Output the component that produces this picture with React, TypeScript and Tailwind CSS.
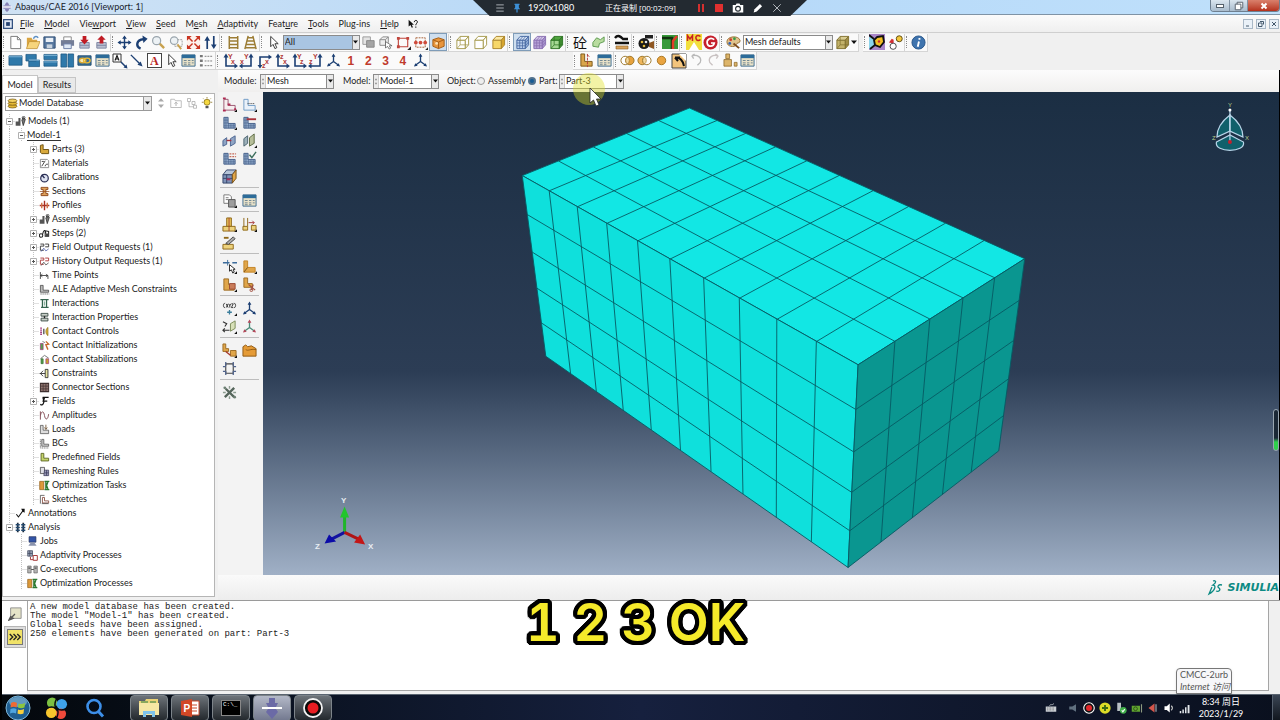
import React from "react";

type Kids = { children?: React.ReactNode };

/* ---------- drawing helpers ---------- */

function Ico({ children, className = "size-[15px]" }: Kids & { className?: string }) {
  return (
    <svg viewBox="0 0 16 16" className={className + " shrink-0"} fill="none" aria-hidden="true">
      {children}
    </svg>
  );
}

const NAVY = "#1c3f73";
const TAN = "#e0a64a";

const axisPaths: Record<string, string> = {
  bl: "M4 3V13H14",
  br: "M12 3V13H2",
  tl: "M4 14V4H14",
};

function AxisIcon({ kind, v, h }: { kind: string; v: string; h: string }) {
  const right = kind === "br";
  const top = kind === "tl";
  return (
    <Ico className="size-4">
      <path d={axisPaths[kind]} stroke={NAVY} strokeWidth="1.600" />
      {top ? (
        <path d="M1.500 12L4 15.500L6.500 12ZM12.500 1.500L16 4L12.500 6.500Z" fill={NAVY} />
      ) : right ? (
        <path d="M9.500 4.500L12 0.500L14.500 4.500ZM3.500 10.500L0 13L3.500 15.500Z" fill={NAVY} />
      ) : (
        <path d="M1.500 4.500L4 0.500L6.500 4.500ZM12.500 10.500L16 13L12.500 15.500Z" fill={NAVY} />
      )}
      <text x={top ? 6 : right ? 5 : 6} y={top ? 15 : 6} fontSize="7" fontWeight="700" fill="#b13a3a" fontFamily="Liberation Sans, sans-serif">{v}</text>
      <text x={right ? 1 : 9} y="11" fontSize="7" fontWeight="700" fill="#b13a3a" fontFamily="Liberation Sans, sans-serif">{h}</text>
    </Ico>
  );
}

function Triad({ red = false }: { red?: boolean }) {
  return (
    <Ico>
      <path d="M8 9V2M8 9L2.500 13M8 9L13.500 13" stroke={red ? "#4a8a78" : NAVY} strokeWidth="1.400" />
      <path d="M6 4L8 0.500L10 4ZM1 14.500L2.500 11L5 13.500ZM15 14.500L13.500 11L11 13.500Z" fill={red ? "#b5485a" : NAVY} />
    </Ico>
  );
}

function Cube({ front, top, side, line, grid = false, frame = false }: { front: string; top: string; side: string; line: string; grid?: boolean; frame?: boolean }) {
  return (
    <Ico>
      <path d="M2 5.500H11V14.500H2Z" fill={front} stroke={line} />
      <path d="M2 5.500L5.500 1.500H14.500L11 5.500Z" fill={top} stroke={line} />
      <path d="M11 5.500L14.500 1.500V10.500L11 14.500Z" fill={side} stroke={line} />
      {grid && <path d="M5 5.500V14.500M8 5.500V14.500M2 8.500H11L14.500 4.500M2 11.500H11L14.500 7.500M5 5.500L8.500 1.500M8 5.500L11.500 1.500" stroke={line} strokeWidth="0.800" />}
      {frame && <path d="M5.500 1.500V10.500H14.500M5.500 10.500L2 14.500" stroke={line} strokeWidth="0.800" />}
    </Ico>
  );
}

function Bracket({ fill = "#7f9bbd", line = "#45608a", mesh = false, children }: Kids & { fill?: string; line?: string; mesh?: boolean }) {
  return (
    <Ico>
      <path d="M2 2.500H6.500V9H14V14H2Z" fill={fill} stroke={line} />
      {mesh && <path d="M4.200 2.500V14M2 5.500H6.500M2 8.500H6.500M2 11.500H14M7 9V14M9.500 9V14M12 9V14" stroke={line} strokeWidth="0.600" />}
      {children}
    </Ico>
  );
}

function Win({ tone }: { tone: "single" | "cascade" | "rows" | "cols" }) {
  const shape = {
    single: "M1 3H15V13H1Z",
    cascade: "M1 1.500H12V8.500H1ZM4 7.500H15.500V14.500H4Z",
    rows: "M1 1.500H15V7H1ZM1 8.500H15V14H1Z",
    cols: "M1 1H7V15H1ZM8.500 1H14.500V15H8.500Z",
  }[tone];
  return (
    <Ico>
      <path d={shape} fill="#2f79aa" stroke="#1d5580" strokeWidth="0.800" />
      {tone === "cascade" && <path d="M4 7.500H15.500" stroke="#a8d3ee" />}
      {tone === "rows" && <path d="M1 2.500H15M1 9.500H15" stroke="#83b9da" />}
      {tone === "single" && <path d="M1 4H15" stroke="#83b9da" />}
    </Ico>
  );
}

const TableIco = () => (
  <Ico>
    <path d="M1 2H15V14H1Z" fill="#e9e2c8" stroke="#3b6a8f" />
    <path d="M1 2H15V5.500H1Z" fill="#2d6c99" />
    <path d="M3 8H6M7.500 8H10M11.500 8H13.500M3 10.500H6M7.500 10.500H10M11.500 10.500H13.500M3 12.500H6M7.500 12.500H10" stroke="#6b8291" />
  </Ico>
);

const Cursor = () => (
  <Ico>
    <path d="M5 1.500V12.500L7.500 10L9.500 14.500L11.500 13.500L9.500 9.300H13Z" fill="#fff" stroke="#333" />
  </Ico>
);

const Num = ({ n }: { n: string }) => <span className="font-['Liberation_Sans',sans-serif] text-[12px] font-bold leading-4 text-[#c03a2c]">{n}</span>;

const Rings = ({ a, b }: { a: string; b: string }) => (
  <Ico>
    <circle cx="5.500" cy="8" r="4.500" fill={a} stroke="#9a7426" />
    <circle cx="10.500" cy="8" r="4.500" fill={b} stroke="#9a7426" />
    <path d="M8 4.300A4.500 4.500 0 0 1 8 11.700A4.500 4.500 0 0 1 8 4.300Z" fill="#f5d9a0" stroke="#9a7426" strokeWidth="0.700" />
  </Ico>
);

/* ---------- toolbar parts ---------- */

function Btn({ label, on, children }: Kids & { label: string; on?: boolean }) {
  return (
    <button
      type="button"
      aria-label={label}
      className={on ? "flex size-[18px] items-center justify-center border border-[#7f9cb8] bg-[#cfdfef]" : "flex size-4 items-center justify-center"}
    >
      {children}
    </button>
  );
}

function Bar({ w, children }: Kids & { w: string }) {
  return (
    <div className={w + " flex h-[18px] shrink-0 items-center border-r border-b border-[#d5d5d5] bg-[#fafafa]"}>
      <span className="mx-px h-3 w-[3px] shrink-0 border-l border-dotted border-[#888]" />
      <div className="flex min-w-0 flex-1 items-center justify-around">{children}</div>
    </div>
  );
}

function Drop({ label, value, w, spin, tone = "bg-white" }: { label: string; value: string; w: string; spin?: boolean; tone?: string }) {
  return (
    <div className={w + " " + tone + " flex h-[15px] shrink-0 items-stretch border border-[#8b8b8b]"}>
      {spin && (
        <span className="flex w-[5px] items-center border-r border-[#ccc] bg-[#ececec]">
          <svg viewBox="0 0 5 11" className="h-[11px] w-[5px]" aria-hidden="true">
            <path d="M1 4L2.500 1.500L4 4ZM1 7L2.500 9.500L4 7Z" fill="#888" />
          </svg>
        </span>
      )}
      <select aria-label={label} className="min-w-0 flex-1 appearance-none bg-transparent pl-px text-[9px] leading-3 text-[#222] outline-none">
        <option>{value}</option>
      </select>
      <span className="pointer-events-none flex w-[7px] items-center justify-center border-l border-[#8b8b8b] bg-[#e9e9e9]">
        <svg viewBox="0 0 5 4" className="h-1 w-[5px]" aria-hidden="true">
          <path d="M0 0.500H5L2.500 3.500Z" fill="#111" />
        </svg>
      </span>
    </div>
  );
}

/* ---------- header ---------- */

function TitleBar() {
  return (
    <div className="relative flex h-[15px] items-start justify-between border-b border-[#7f93a5] bg-linear-to-r from-[#cfe2f4] via-[#b5d8f8] to-[#bfe0fb]">
      <div className="flex items-center gap-[3px]">
        <Ico className="size-[10px]">
          <path d="M8 0L11 3V6H5V3ZM8 16L11 13V10H5V13Z" fill="#8481b4" />
          <path d="M0 8L3 5H13L16 8L13 11H3Z" fill="#9a97c4" />
          <path d="M0 8H16" stroke="#fff" strokeWidth="2" />
        </Ico>
        <h1 className="text-[9px] leading-[14px] text-[#16202b]">Abaqus/CAE 2016 [Viewport: 1]</h1>
      </div>
      <div className="flex h-3 overflow-hidden rounded-b-sm border border-t-0 border-[#6e7f90]">
        <button type="button" aria-label="Minimize" className="flex w-[19px] items-center justify-center border-r border-[#8293a4] bg-linear-to-b from-[#dbe6ef] to-[#a9bccd]">
          <span className="h-1 w-2 border border-[#55606b] bg-white" />
        </button>
        <button type="button" aria-label="Restore" className="flex w-[18px] items-center justify-center border-r border-[#8293a4] bg-linear-to-b from-[#dbe6ef] to-[#a9bccd]">
          <Ico className="size-2.5">
            <path d="M5 2H14V11H5Z" fill="#fff" stroke="#55606b" strokeWidth="1.500" />
            <path d="M2 5H11V14H2Z" fill="#fff" stroke="#55606b" strokeWidth="1.500" />
          </Ico>
        </button>
        <button type="button" aria-label="Close" className="flex w-[31px] items-center justify-center bg-linear-to-b from-[#d9806c] to-[#b5301c]">
          <Ico className="size-2">
            <path d="M3 3L13 13M13 3L3 13" stroke="#fff" strokeWidth="4" />
          </Ico>
        </button>
      </div>
    </div>
  );
}

function RecorderBar() {
  return (
    <div className="absolute top-0 left-[471px] flex h-4 w-[334px] items-center bg-[#232a31] pl-[22px] text-white [clip-path:polygon(0_0,100%_0,95%_100%,5%_100%)]">
      <Ico className="size-2.5">
        <path d="M2 3H14M2 8H14M2 13H14" stroke="#b9bec3" strokeWidth="1.400" />
      </Ico>
      <Ico className="ml-[7px] size-2.5">
        <path d="M4 1H12V3H11V7L13 10H3L5 7V3H4ZM7 10H9V15H7Z" fill="#3c8fd6" />
      </Ico>
      <span className="ml-[6px] w-[77px] text-[9px] leading-4">1920x1080</span>
      <span className="w-[91px] font-['Open_Sans','Noto_Sans_CJK_SC',sans-serif] text-[8px] leading-4">正在录制 [00:02:09]</span>
      <div className="flex items-center gap-[9px]">
        <button type="button" aria-label="Pause recording" className="flex size-2.5 items-center justify-center gap-[2px]">
          <span className="h-2 w-[2px] bg-[#d4302f]" />
          <span className="h-2 w-[2px] bg-[#d4302f]" />
        </button>
        <button type="button" aria-label="Stop recording" className="size-2 bg-[#e0302f]" />
        <button type="button" aria-label="Take picture">
          <Ico className="size-3">
            <path d="M1 4H5L6 2H10L11 4H15V14H1Z" fill="#fff" />
            <circle cx="8" cy="9" r="3.200" stroke="#232a31" strokeWidth="1.500" />
          </Ico>
        </button>
        <button type="button" aria-label="Draw">
          <Ico className="size-2.5">
            <path d="M1 15L2.500 10L11 1.500L14.500 5L6 13.500Z" fill="#fff" />
          </Ico>
        </button>
        <button type="button" aria-label="Hide recorder">
          <Ico className="size-2.5">
            <path d="M2 2L14 14M14 2L2 14" stroke="#b9bec3" strokeWidth="1.500" />
          </Ico>
        </button>
      </div>
    </div>
  );
}

const menus: [string, string, string][] = [
  ["", "F", "ile"],
  ["", "M", "odel"],
  ["Vie", "w", "port"],
  ["", "V", "iew"],
  ["", "S", "eed"],
  ["M", "e", "sh"],
  ["", "A", "daptivity"],
  ["Feat", "u", "re"],
  ["", "T", "ools"],
  ["Plu", "g", "-ins"],
  ["", "H", "elp"],
];

function MenuBar() {
  return (
    <nav className="flex h-[18px] items-center border-b border-[#cfcfcf] bg-linear-to-b from-[#fbfbfb] to-[#efefef] pl-px">
      <Ico className="mr-[7px] size-2.5">
        <path d="M1 1H15V15H1Z" fill="#dfe6f2" stroke="#33507f" strokeWidth="2" />
        <path d="M5 5H11V11H5Z" fill="#24406e" />
      </Ico>
      <div className="flex gap-[10px] text-[9px] leading-4">
        {menus.map(([a, u, b]) => (
          <button type="button" key={a + u + b}>
            {a}
            <span className="underline">{u}</span>
            {b}
          </button>
        ))}
      </div>
      <Ico className="ml-[9px] size-2.5">
        <path d="M1 1V12L4 9.500L6 14L8 13L6 9H9.500Z" fill="#111" />
        <path d="M10 5C10 1.500 15 1.500 15 4.500C15 7 12.500 7 12.500 10M12.500 12V14" stroke="#111" strokeWidth="1.600" />
      </Ico>
      <div className="ml-auto flex gap-[3px] pr-px">
        {["M4 12H10", "M6 3H13V9M3 6H10V13H3Z", "M4 4L12 12M12 4L4 12"].map((d, i) => (
          <button type="button" key={d} aria-label={["Minimize viewport", "Restore viewport", "Close viewport"][i]} className="border border-[#a9b8c6] bg-[#eaf1f8]">
            <Ico className="size-2">
              <path d={d} stroke="#44586b" strokeWidth="2" />
            </Ico>
          </button>
        ))}
      </div>
    </nav>
  );
}

function MainToolbar() {
  return (
    <div className="flex h-[19px] items-center bg-[#f0f0f0]">
      <Bar w="w-[109px]">
        <Btn label="New"><Ico><path d="M3 1.500H10L13.500 5V14.500H3Z" fill="#fff" stroke="#777" /><path d="M10 1.500V5H13.500" stroke="#777" /></Ico></Btn>
        <Btn label="Open"><Ico><path d="M2 3H7L8 5H13V14H2Z" fill="#d9a441" /><path d="M4.500 7H16L13 14.500H1.500Z" fill="#f7d57c" stroke="#b98728" strokeWidth="0.700" /><path d="M9 4C10 1 13 1 14 3" stroke="#5c8fc4" strokeWidth="1.500" /></Ico></Btn>
        <Btn label="Save"><Ico><path d="M2 2H14V14H2Z" fill="#56779f" stroke="#2f4d74" /><path d="M4 3H12V7.500H4Z" fill="#e8eef5" /><path d="M5 10H11V14H5Z" fill="#c7d2de" /></Ico></Btn>
        <Btn label="Print"><Ico><path d="M4 2H12V6H4Z" fill="#fff" stroke="#888" /><path d="M1 5.500H15V11.500H1Z" fill="#747d96" /><path d="M4 9.500H12V14.500H4Z" fill="#dfe8f5" stroke="#6c7da5" /></Ico></Btn>
        <Btn label="Import database"><Ico><path d="M3 8H13V14H3Z" fill="#b9bfd0" stroke="#7d86a2" /><path d="M3 11H13" stroke="#7d86a2" /><path d="M6 1H10V5H12.500L8 10L3.500 5H6Z" fill="#c01c24" /></Ico></Btn>
        <Btn label="Export database"><Ico><path d="M3 8H13V14H3Z" fill="#b9bfd0" stroke="#7d86a2" /><path d="M3 11H13" stroke="#7d86a2" /><path d="M6 9H10V5H12.500L8 0.500L3.500 5H6Z" fill="#c01c24" /></Ico></Btn>
      </Bar>
      <Bar w="w-[109px]">
        <Btn label="Pan"><Ico><path d="M8 2V14M2 8H14" stroke={NAVY} strokeWidth="1.500" /><path d="M5.500 4L8 0.500L10.500 4ZM5.500 12L8 15.500L10.500 12ZM4 5.500L0.500 8L4 10.500ZM12 5.500L15.500 8L12 10.500Z" fill={NAVY} /></Ico></Btn>
        <Btn label="Rotate"><Ico><path d="M7 14.500C1.500 12 2.500 5 10 4.500" stroke={NAVY} strokeWidth="2.600" /><path d="M9 0.500L14.500 4L10 8.500Z" fill={NAVY} /></Ico></Btn>
        <Btn label="Magnify"><Ico><path d="M9 9L14 14" stroke="#c9a24e" strokeWidth="2.500" /><circle cx="6" cy="6" r="4.300" fill="#edf2f5" stroke="#9aa5ad" strokeWidth="1.300" /></Ico></Btn>
        <Btn label="Box zoom"><Ico><path d="M6 5H14V12H6Z" stroke="#9a9a9a" strokeDasharray="2 1" /><path d="M9 10L13 15" stroke="#c9a24e" strokeWidth="2" /><circle cx="5.500" cy="6" r="4" fill="#edf2f5" stroke="#9aa5ad" strokeWidth="1.200" /></Ico></Btn>
        <Btn label="Auto fit"><Ico><path d="M1 1H15V15H1Z" fill="#fdf1ec" /><path d="M1 1H6L1 6ZM15 1V6L10 1ZM1 15V10L6 15ZM15 15H10L15 10Z" fill="#c93522" /><path d="M3 3L7 7M13 3L9 7M3 13L7 9M13 13L9 9" stroke="#c93522" strokeWidth="1.600" /></Ico></Btn>
        <Btn label="Cycle views"><Ico><path d="M4.500 5V15M11.500 1V11" stroke={NAVY} strokeWidth="1.800" /><path d="M1.500 6L4.500 1L7.500 6ZM8.500 10L11.500 15L14.500 10Z" fill={NAVY} /></Ico></Btn>
      </Bar>
      <Bar w="w-[40px]">
        <Btn label="Perspective off"><Ico><path d="M3.500 1V15M12.500 1V15M3.500 3H12.500M3.500 6.500H12.500M3.500 10H12.500M3.500 13.500H12.500" stroke="#9c7d35" strokeWidth="1.600" /></Ico></Btn>
        <Btn label="Perspective on"><Ico><path d="M5.500 1L2 15M10.500 1L14 15M5 3H11M4.500 6.500H11.500M3.500 10H12.500M2.500 13.500H13.500" stroke="#9c7d35" strokeWidth="1.600" /></Ico></Btn>
      </Bar>
      <Bar w="w-[189px]">
        <Btn label="Select"><Cursor /></Btn>
        <Drop label="Selection filter" value="All" w="w-[77px]" tone="bg-[#a9c5e2]" />
        <Btn label="Selection overlap"><Ico><path d="M2 2H10V10H2Z" fill="#e4e4e4" stroke="#9b9b9b" /><path d="M6 6H14V13H6Z" fill="#a5a5a5" stroke="#888" /></Ico></Btn>
        <Btn label="Selection inside"><Ico><path d="M2 5L5 2H11V8L8 11H2ZM2 5H8V11M8 5L11 2" fill="#eee" stroke="#888" /><path d="M8 7V14L10 12L12 15L13.500 14L12 11.500H15Z" fill="#fff" stroke="#555" strokeWidth="0.800" /></Ico></Btn>
        <Btn label="Drag shape"><Ico><path d="M2.500 3.500H12.500V12.500H2.500Z" stroke="#c0463d" strokeWidth="1.200" /><path d="M1 2H4V5H1ZM11 2H14V5H11ZM1 11H4V14H1Z" fill="#c0463d" /><path d="M16 16H12L16 12Z" fill="#222" /></Ico></Btn>
        <Btn label="Drag limits"><Ico><path d="M3 3H13V13H3Z" stroke="#a35b30" strokeDasharray="2 1" /><circle cx="3" cy="8" r="2" fill="#cf4b3c" /><circle cx="8" cy="8" r="2" fill="#cf4b3c" /><circle cx="13" cy="8" r="2" fill="#cf4b3c" /><path d="M16 16H13L16 13Z" fill="#222" /></Ico></Btn>
        <Btn label="Select entities" on><Ico><path d="M2 5L8 3L14 5V12L8 14.500L2 12Z" fill="#e8953c" stroke="#a35c14" /><path d="M2 5L8 7.500L14 5M8 7.500V14.500" stroke="#a35c14" /><circle cx="6" cy="9" r="1.500" fill="#fce1b4" /></Ico></Btn>
      </Bar>
      <Bar w="w-[59px]">
        <Btn label="Wireframe"><Cube front="#fff" top="#fff" side="#fff" line="#a59a4d" frame /></Btn>
        <Btn label="Hidden line"><Cube front="#fff" top="#fff" side="#fff" line="#a59a4d" /></Btn>
        <Btn label="Shaded"><Cube front="#f7d768" top="#fbe9a4" side="#d7a52e" line="#ab8429" /></Btn>
      </Bar>
      <Bar w="w-[58px]">
        <Btn label="Show mesh" on><Cube front="#b7cdec" top="#d5e2f4" side="#94b0da" line="#4769a2" grid /></Btn>
        <Btn label="Show seeds"><Cube front="#b7a3d8" top="#d3c6ea" side="#a893cf" line="#8a70b2" grid /></Btn>
        <Btn label="Show geometry"><Cube front="#a5d894" top="#51a53f" side="#3f8c30" line="#2d7424" frame /></Btn>
      </Bar>
      <Bar w="w-[42px]">
        <Btn label="Concrete"><span className="font-['Noto_Sans_CJK_SC',sans-serif] text-[14px] leading-4 text-[#111]">砼</span></Btn>
        <Btn label="Feature copy"><Ico><path d="M2 8L6 3L10 5L14 2V7L9 9L8 13L2 12Z" fill="#b9dca0" stroke="#5c9a4f" /></Ico></Btn>
      </Bar>
      <Bar w="w-[24px]">
        <Btn label="Seam"><Ico className="size-4"><path d="M1 4C4 0 7 3 9 5H14M1 9H15" stroke="#111" strokeWidth="2.400" /><path d="M2 12H14V15H2Z" fill="#d9a35c" stroke="#8b5b1e" strokeWidth="0.600" /></Ico></Btn>
      </Bar>
      <Bar w="w-[23px]">
        <Btn label="GIF recorder"><Ico className="size-4"><circle cx="6" cy="9.500" r="5.500" fill="#1a1a1a" /><path d="M7 1H15V4.500H7Z" fill="#222" /><circle cx="4" cy="8" r="1.300" fill="#e2b93c" /><circle cx="8" cy="8" r="1.300" fill="#e8e8e8" /><circle cx="6" cy="12" r="1.300" fill="#e2b93c" /><path d="M11 9L16 7V15L11 13Z" fill="#8f5722" /></Ico></Btn>
      </Bar>
      <Bar w="w-[25px]">
        <Btn label="Root model"><Ico className="size-4"><path d="M0 1H16V15H0Z" fill="#379a3a" /><path d="M0 4H10V15" stroke="#12320f" strokeWidth="2.500" /><path d="M15 2L11 7V15" stroke="#e13c28" strokeWidth="2.500" /></Ico></Btn>
      </Bar>
      <Bar w="w-[40px]">
        <Btn label="MC"><Ico className="size-4"><path d="M0 0H16V16H0Z" fill="#f2df3d" /><path d="M1.500 7V1.500L4 5L6.500 1.500V7M14.500 2.500C11 0 9.500 2.500 10 4.500C10.500 7 13 7 14.500 5.500" stroke="#c82222" strokeWidth="1.500" /><path d="M3 16L8 8L13 16Z" fill="#fff" /></Ico></Btn>
        <Btn label="Grain"><Ico><circle cx="8" cy="8" r="7.500" fill="#c51f2c" /><path d="M12 5C8 1.500 3.500 5 4.500 9C5.500 13 11 13 12 8.500H8.500" stroke="#fff" strokeWidth="1.800" /></Ico></Btn>
      </Bar>
      <Bar w="w-[139px]">
        <Btn label="Colour code"><Ico><path d="M1 7C1 1 14 0 15 6C15.500 9 11 8 11 10C11 13 1 14 1 7Z" fill="#dfc28c" stroke="#997237" /><circle cx="5" cy="5" r="1.500" fill="#cf3a2d" /><circle cx="9" cy="4" r="1.500" fill="#3b9a48" /><circle cx="4" cy="9" r="1.500" fill="#2f60b5" /><path d="M8 9L14 14" stroke="#7c4b1d" strokeWidth="2" /></Ico></Btn>
        <Drop label="Color mapping" value="Mesh defaults" w="w-[90px]" />
        <Btn label="Translucency"><Cube front="#c3b26a" top="#d9cd93" side="#a08d46" line="#81712f" frame /></Btn>
        <Ico className="size-1.5"><path d="M0 4H16L8 13Z" fill="#111" /></Ico>
      </Bar>
      <div className="w-1 shrink-0" />
      <Bar w="w-[42px]">
        <Btn label="Voronoi"><Ico className="size-4"><path d="M0 0H16V16H0Z" fill="#a985c9" /><path d="M0 3L5 4L6 11L1 15H0Z" fill="#8cd4ec" /><path d="M8 3L14 2L15 8L11 13L6 11L5 6Z" fill="#f2bf24" stroke="#111" strokeWidth="1.800" /><path d="M0 1L5 5M6 11L1 15" stroke="#111" strokeWidth="1.800" /><circle cx="10" cy="7.500" r="1.200" fill="#c33" /></Ico></Btn>
        <Btn label="Aggregate"><Ico><path d="M1 8L4 4L6 5V9Z" fill="#d32f33" /><circle cx="12" cy="4" r="3.200" fill="#f3c73b" stroke="#5b4a11" /><circle cx="5.500" cy="12" r="3.300" fill="#fff" stroke="#444" /></Ico></Btn>
      </Bar>
      <Bar w="w-[23px]">
        <Btn label="Information"><Ico><circle cx="8" cy="8" r="7" fill="#3f74ae" stroke="#27558a" /><path d="M9 3.200V5M8.500 7L7.200 12.500" stroke="#fff" strokeWidth="2" /></Ico></Btn>
      </Bar>
    </div>
  );
}

function ViewToolbar() {
  return (
    <div className="flex h-[18px] items-center bg-[#f0f0f0]">
      <Bar w="w-[214px]">
        <Btn label="Single viewport"><Win tone="single" /></Btn>
        <Btn label="Cascade"><Win tone="cascade" /></Btn>
        <Btn label="Tile horizontally"><Win tone="rows" /></Btn>
        <Btn label="Tile vertically"><Win tone="cols" /></Btn>
        <Btn label="Link viewports"><Ico><path d="M1 3H15V13H1Z" fill="#3b6f96" stroke="#1d4c70" /><ellipse cx="6" cy="8" rx="3.500" ry="2.500" fill="#f4e7b5" stroke="#d9a42c" strokeWidth="1.500" /><ellipse cx="10.500" cy="8" rx="3.500" ry="2.500" stroke="#e9ba36" strokeWidth="1.500" /></Ico></Btn>
        <Btn label="Viewport options"><TableIco /></Btn>
        <Btn label="Text callout"><Ico className="size-4"><path d="M1 1H9V9H1Z" fill="#fff" stroke="#333" /><path d="M3 7.500L5 2.500L7 7.500M4 6H6" stroke="#111" strokeWidth="1.100" /><path d="M9 9L14 14" stroke={NAVY} strokeWidth="1.500" /><path d="M15.500 15.500L11.500 14.500L14.500 11.500Z" fill={NAVY} /></Ico></Btn>
        <Btn label="Arrow annotation"><Ico><path d="M2 2L12 12" stroke={NAVY} strokeWidth="1.500" /><path d="M14.500 14.500L9 12.500L12.500 9Z" fill={NAVY} /></Ico></Btn>
        <Btn label="Text annotation"><span className="flex size-[15px] items-center justify-center border border-[#444] bg-white font-['Liberation_Serif',serif] text-[12px] font-bold leading-3 text-[#b8251d]">A</span></Btn>
        <Btn label="Edit annotation"><Cursor /></Btn>
        <Btn label="Annotation manager"><TableIco /></Btn>
        <Btn label="Annotation list"><Ico><path d="M1 2H4V4.500H1ZM1 7H4V9.500H1ZM1 12H4V14.500H1Z" fill="#777" /><path d="M6 3.500H15M6 8.500H15M6 13.500H15" stroke="#777" strokeDasharray="2 1" /></Ico></Btn>
      </Bar>
      <Bar w="w-[214px]">
        <Btn label="Front view"><AxisIcon kind="bl" v="Y" h="x" /></Btn>
        <Btn label="Back view"><AxisIcon kind="br" v="Y" h="x" /></Btn>
        <Btn label="Top view"><AxisIcon kind="tl" v="z" h="x" /></Btn>
        <Btn label="Bottom view"><AxisIcon kind="bl" v="z" h="x" /></Btn>
        <Btn label="Left view"><AxisIcon kind="bl" v="Y" h="z" /></Btn>
        <Btn label="Right view"><AxisIcon kind="br" v="Y" h="z" /></Btn>
        <Btn label="Isometric view"><Triad /></Btn>
        <Btn label="User view 1"><Num n="1" /></Btn>
        <Btn label="User view 2"><Num n="2" /></Btn>
        <Btn label="User view 3"><Num n="3" /></Btn>
        <Btn label="User view 4"><Num n="4" /></Btn>
        <Btn label="Save view"><Triad /></Btn>
      </Bar>
      <div className="w-[143px] shrink-0" />
      <Bar w="w-[41px]">
        <Btn label="Create datum"><Ico><path d="M2 1H6V9H14V14H2Z" fill="#d9a54b" stroke="#7d5a1c" /><path d="M9 1V15M11 4L9 2" stroke="#b03a3a" strokeDasharray="3 1" /></Ico></Btn>
        <Btn label="Display group manager"><TableIco /></Btn>
      </Bar>
      <Bar w="w-[143px]">
        <Btn label="Replace group"><Rings a="#fff" b="#e7a23d" /></Btn>
        <Btn label="Intersect group"><Rings a="#f0b65a" b="#fff" /></Btn>
        <Btn label="Display all"><Ico><circle cx="8" cy="8" r="4.500" fill="#e9a441" stroke="#a8741f" /></Ico></Btn>
        <Btn label="Remove selected"><Ico className="size-4"><path d="M1 1H15V15H1Z" fill="#f3c47c" stroke="#444" /><path d="M8 1H15V8Z" fill="#fff" /><path d="M4 4.500H9M4 4.500L7 8M5 5C9 4 12 8 13 13" stroke="#111" strokeWidth="2" /></Ico></Btn>
        <Btn label="Undo"><Ico><path d="M3 3C9 1 14 5 12 10L9 13M3 3L6 1M3 3L5 6" stroke="#b9b9b9" strokeWidth="1.400" /></Ico></Btn>
        <Btn label="Redo"><Ico><path d="M13 3C7 1 2 5 4 10L7 13M13 3L10 1M13 3L11 6" stroke="#c9c2c2" strokeWidth="1.400" /></Ico></Btn>
        <Btn label="Part group"><Ico><path d="M3 1H7V6H3ZM1 7H9V14H1ZM12 10H15V14H12Z" fill="#ddb56a" stroke="#8b6525" strokeWidth="0.800" /></Ico></Btn>
        <Btn label="Group options"><TableIco /></Btn>
      </Bar>
    </div>
  );
}

/* ---------- model tree ---------- */

const treeIcons: Record<string, React.ReactNode> = {
  models: <><path d="M1 14V8H5V3H8V14Z" fill="#555" /><path d="M12 2L15 5L12 14L10 6Z" fill="#777" stroke="#222" /><circle cx="12.500" cy="2.500" r="2" stroke="#222" /></>,
  part: <path d="M2 2L6 1V8H14V14H4L2 12Z" fill="#d8a93c" stroke="#6d5113" strokeWidth="1.400" />,
  material: <><path d="M2 2H12L14 4V14H2Z" stroke="#666" /><path d="M4 12L9 4M9 12C9 9 11 9 13 9M4 5H7" stroke="#444" strokeWidth="1.400" /></>,
  calib: <><circle cx="8" cy="9" r="5.500" fill="#dfe4f2" stroke="#2b2f55" strokeWidth="1.800" /><path d="M8 9L4 4" stroke="#2b2f55" strokeWidth="2" /></>,
  section: <><path d="M3 2H13V5H10V11H13V14H3V11H6V5H3Z" fill="#e0a35d" stroke="#8a4519" strokeWidth="1.300" /><path d="M1 8H15" stroke="#8a4519" /></>,
  profile: <><path d="M8 1V15M1 8H15" stroke="#a82f22" strokeWidth="2" /><path d="M4 4V12M12 4V12" stroke="#d07245" strokeWidth="2" /></>,
  step: <><circle cx="3" cy="11" r="2.500" stroke="#222" strokeWidth="1.500" /><path d="M5 10C7 2 9 2 10 8M9 4L14 5V12L9 12Z" stroke="#222" strokeWidth="1.500" /><path d="M10 8H14V12H10Z" fill="#444" /></>,
  field: <><path d="M2 3H7V6H2V12H7M9 3H14V7H9" stroke="#333" strokeWidth="1.300" /><path d="M3 14L7 9L10 13L14 10" stroke="#3a4fa5" /></>,
  history: <><path d="M2 3H7V6H2V12H7M9 3H14V7H9" stroke="#a33" strokeWidth="1.300" /><path d="M3 14L7 9L10 13L14 10" stroke="#333" /></>,
  time: <><path d="M2 3V13M13 8V13M2 8H13" stroke="#333" strokeWidth="1.200" /><path d="M5 6L2 8L5 10M10 6L13 8L10 10" stroke="#333" /></>,
  ale: <><path d="M2 2H6V9H14V12H2Z" fill="#bbb" stroke="#333" /><path d="M2 14.500H15" stroke="#333" strokeDasharray="2 1" /></>,
  inter: <><path d="M2 2.500H14M3 13.500H14M5 3V13M11 3V13" stroke="#35644f" strokeWidth="1.800" /><path d="M7 5H9V11H7Z" fill="#8cb5a0" /></>,
  interp: <><path d="M3 2H13V6H3ZM3 9H13V13H3Z" fill="#c8cfc8" stroke="#3a4a44" strokeWidth="1.300" /><path d="M8 6V9" stroke="#222" strokeWidth="2" /></>,
  contact: <><path d="M3 2V14" stroke="#a0357a" strokeWidth="2.500" strokeDasharray="2 1" /><path d="M7 4V12" stroke="#555" strokeWidth="2" /><path d="M13 2C9 5 9 11 13 14Z" fill="#ddb53c" stroke="#8c6c14" /></>,
  contact2: <><path d="M2 5H6V14H2Z" fill="#57a04f" stroke="#a0357a" /><path d="M10 2L14 6L10 7L13 14" stroke="#c7672c" strokeWidth="2" /><path d="M5 2L9 4" stroke="#555" /></>,
  contact3: <><path d="M2 7L8 2L14 6" stroke="#777" strokeWidth="1.400" /><path d="M3 7H6V14H3Z" fill="#57a04f" stroke="#2d6628" /><path d="M10 7H14V14H10Z" fill="#c9a52f" stroke="#a0357a" /></>,
  constraint: <><path d="M9 2H13V14H9Z" fill="#e8e5a0" stroke="#333" strokeWidth="1.300" /><path d="M1 8H9M6 4L2 8L6 12" stroke="#333" strokeWidth="1.300" /></>,
  connector: <><path d="M2 2H14V14H2Z" fill="#8f7570" stroke="#3f3030" strokeWidth="1.500" /><path d="M6 2V14M10 2V14M2 6H14M2 10H14" stroke="#3f3030" /></>,
  fields: <path d="M14 2H6C5 4 8 6 7 9C6 13 4 14 2 12M5 7.500H12M8 3L6 8" stroke="#111" strokeWidth="1.800" />,
  amp: <><path d="M2 14V2M2 8C4 0 7 2 8 8C9 15 13 15 14 6" stroke="#86505a" strokeWidth="1.400" /></>,
  load: <><path d="M2 2H6V9H14V14H2Z" fill="#ddd" stroke="#444" /><path d="M10 1V7M8 5L10 8L12 5" stroke="#6a4d2c" strokeWidth="1.200" /></>,
  bc: <><path d="M4 2H7V9H14V12H4Z" fill="#ccc" stroke="#444" /><path d="M2 2V14.500H14" stroke="#333" strokeDasharray="1.500 1" /></>,
  predef: <path d="M3 2H7V9H14V13H3Z" fill="#c5d46d" stroke="#5a6422" strokeWidth="1.300" />,
  remesh: <><path d="M2 2H8V11H2Z" fill="#e0e0e6" stroke="#333" /><path d="M8 6H14V14H7Z" fill="#9b9bb8" stroke="#333355" /><path d="M11 6V14M8 10H14" stroke="#333355" /></>,
  optim: <><path d="M1 2H7V14H1Z" fill="#dd9a3b" stroke="#8f5a14" /><path d="M8 2H15M8 14H15M10 3V13M13 3L11 8L13 13" stroke="#2d7a32" strokeWidth="2" /></>,
  sketch: <><path d="M5 5H8V10H14V13H5Z" stroke="#8d5548" strokeWidth="1.300" /><path d="M2 2H8M2 2V14M14 14H4" stroke="#333" /></>,
  note: <><path d="M2 9L5 13L13 2" stroke="#111" strokeWidth="1.500" /><path d="M9 1H14V7L11 5Z" fill="#111" /></>,
  analysis: <><path d="M4 1V15M12 1V15" stroke="#1d2c3f" strokeWidth="2.500" /><path d="M1 4H7M1 8H7M1 12H7M9 4H15M9 8H15M9 12H15" stroke="#234a70" strokeWidth="2" /></>,
  job: <><path d="M3 1H13V9H3Z" fill="#3355a8" stroke="#26335c" /><path d="M5 10H11L14 14H2Z" fill="#8a93ad" /></>,
  adapt: <><path d="M1 1H8V9H1Z" fill="#98a2b5" stroke="#3a4257" /><path d="M4 1V9M1 5H8" stroke="#3a4257" /><path d="M5 10V14H9M9 8H15V15H9Z" stroke="#a53737" strokeWidth="1.400" /></>,
  coexec: <><path d="M1 3H6V13H1ZM10 3H15V13H10Z" fill="#b5b5b5" stroke="#666" /><path d="M6 8H10M2 6H5M11 6H14" stroke="#555" strokeWidth="1.500" /></>,
};

type Row = [number, string, string, boolean?];
const rows: Row[] = [
  [0, "models", "Models (1)", true],
  [1, "", "Model-1", true],
  [2, "part", "Parts (3)", false],
  [2, "material", "Materials"],
  [2, "calib", "Calibrations"],
  [2, "section", "Sections"],
  [2, "profile", "Profiles"],
  [2, "models", "Assembly", false],
  [2, "step", "Steps (2)", false],
  [2, "field", "Field Output Requests (1)", false],
  [2, "history", "History Output Requests (1)", false],
  [2, "time", "Time Points"],
  [2, "ale", "ALE Adaptive Mesh Constraints"],
  [2, "inter", "Interactions"],
  [2, "interp", "Interaction Properties"],
  [2, "contact", "Contact Controls"],
  [2, "contact2", "Contact Initializations"],
  [2, "contact3", "Contact Stabilizations"],
  [2, "constraint", "Constraints"],
  [2, "connector", "Connector Sections"],
  [2, "fields", "Fields", false],
  [2, "amp", "Amplitudes"],
  [2, "load", "Loads"],
  [2, "bc", "BCs"],
  [2, "predef", "Predefined Fields"],
  [2, "remesh", "Remeshing Rules"],
  [2, "optim", "Optimization Tasks"],
  [2, "sketch", "Sketches"],
  [0, "note", "Annotations"],
  [0, "analysis", "Analysis", true],
  [1, "job", "Jobs"],
  [1, "adapt", "Adaptivity Processes"],
  [1, "coexec", "Co-executions"],
  [1, "optim", "Optimization Processes"],
];

function TreeRow({ row, underAnalysis }: { row: Row; underAnalysis: boolean }) {
  const [depth, icon, text, open] = row;
  return (
    <li role="treeitem" aria-level={depth + 1} aria-expanded={open} className="flex h-[14px] items-center">
      {Array.from({ length: depth }, (_, i) => (
        <span key={i} className="flex h-full w-3 shrink-0 justify-center">
          {i === 0 && !underAnalysis && <span className="border-l border-dotted border-[#b5b5b5]" />}
        </span>
      ))}
      <svg viewBox="0 0 12 14" className="h-[14px] w-3 shrink-0" fill="none" aria-hidden="true">
        <path d="M6.500 0V14M6.500 7.500H12" stroke="#c2c2c2" strokeDasharray="1 1" />
        {open !== undefined && (
          <>
            <path d="M3.500 4.500H9.500V10.500H3.500Z" fill="#fff" stroke="#b0b0b0" />
            <path d={open ? "M5 7.500H8" : "M5 7.500H8M6.500 6V9"} stroke="#555" />
          </>
        )}
      </svg>
      {icon && <Ico className="size-[11px]">{treeIcons[icon]}</Ico>}
      <span className={icon ? "ml-[2px] whitespace-nowrap" : "border-b border-[#333] leading-[11px] whitespace-nowrap"}>{text}</span>
    </li>
  );
}

function ModelPanel() {
  return (
    <aside className="flex w-[213px] shrink-0 flex-col pb-[3px]">
      <div role="tablist" className="flex h-[23px] items-end text-[9px] leading-3">
        <button type="button" role="tab" aria-selected="true" className="h-[18px] w-[36px] border-x border-t border-[#c5c5c5] bg-white">Model</button>
        <button type="button" role="tab" aria-selected="false" className="h-4 w-[38px] border border-[#c5c5c5] bg-[#e9e9e9]">Results</button>
      </div>
      <div className="flex min-h-0 flex-1 flex-col border border-[#b5b5b5] bg-white">
        <div className="flex h-[18px] items-center pl-[2px]">
          <div className="flex h-[15px] w-[147px] items-stretch border border-[#999]">
            <Ico className="my-auto ml-px size-[11px]">
              <ellipse cx="8" cy="12" rx="6.500" ry="2.500" fill="#e5b935" stroke="#6b4f0d" />
              <ellipse cx="8" cy="8" rx="6.500" ry="2.500" fill="#e5b935" stroke="#6b4f0d" />
              <ellipse cx="8" cy="4" rx="6.500" ry="2.500" fill="#f4d260" stroke="#6b4f0d" />
            </Ico>
            <select aria-label="Tree content" className="flex-1 appearance-none pl-px text-[9px] leading-3 outline-none">
              <option>Model Database</option>
            </select>
            <span className="pointer-events-none flex w-2 items-center justify-center border-l border-[#999] bg-[#e9e9e9]">
              <svg viewBox="0 0 5 4" className="h-1 w-[5px]" aria-hidden="true"><path d="M0 0.500H5L2.500 3.500Z" fill="#111" /></svg>
            </span>
          </div>
          <div className="flex flex-1 items-center justify-between pr-px pl-[3px]">
            <button type="button" aria-label="Step through"><Ico className="size-3"><path d="M4 6L8 1.500L12 6ZM4 10L8 14.500L12 10Z" fill="#aaa" /></Ico></button>
            <button type="button" aria-label="Up one level"><Ico className="size-3"><path d="M1 3H6L7 5H15V14H1Z" stroke="#aaa" /><path d="M8 12V7M6 9L8 7L10 9" stroke="#999" /></Ico></button>
            <button type="button" aria-label="Filter"><Ico className="size-3"><path d="M2 2H6V6H2ZM8 6H12V10H8ZM10 11H14V15H10ZM4 6V13H10" stroke="#aaa" /></Ico></button>
            <button type="button" aria-label="Tips"><Ico className="size-3"><circle cx="8" cy="7" r="4" fill="#f5d840" stroke="#806810" /><path d="M6 12H10V15H6Z" fill="#555" /><path d="M8 0V2M1 7H3M13 7H15M3 2L4 3M13 2L12 3" stroke="#806810" /></Ico></button>
          </div>
        </div>
        <ul role="tree" aria-label="Model tree" className="flex-1 pt-[2px] pb-[6px] text-[9px] leading-[14px] text-[#222]">
          {rows.map((r, i) => (
            <TreeRow key={i} row={r} underAnalysis={i > 29} />
          ))}
        </ul>
      </div>
    </aside>
  );
}

/* ---------- module toolbox ---------- */

const Corner = () => <path d="M16 16H13L16 13Z" fill="#111" />;

const toolbox: [string, React.ReactNode][][] = [
  [
    ["Seed part", <Bracket fill="#f7eef0" line="#9a5570"><path d="M1 1.500H4M1 14.500H4M6 8H9M13 13H15" stroke="#b02a52" strokeWidth="2" /><Corner /></Bracket>],
    ["Seed edges", <Bracket fill="#eaf1f9" line="#6e9bc5"><path d="M6 7H14" stroke="#333" strokeDasharray="1 1" /><Corner /></Bracket>],
    ["Mesh part", <Bracket fill="#8ea7c8" mesh><Corner /></Bracket>],
    ["Mesh controls", <Bracket fill="#8ea7c8" mesh><path d="M5 4.500H15" stroke="#a8323a" strokeWidth="2" /></Bracket>],
    ["Delete mesh", <Ico><path d="M1 8L5 5V12L1 14Z" fill="#8fa5c5" stroke="#4c6490" /><path d="M9 6L14 3V11L9 14Z" fill="#8fa5c5" stroke="#4c6490" /><path d="M5 8H10" stroke="#a8323a" strokeWidth="1.500" /></Ico>],
    ["Associate mesh", <Ico><path d="M2 6L6 3V11L2 14Z" fill="#9db0ba" stroke="#4c6470" /><path d="M8 5L13 1V11L8 14Z" fill="#b7bf9a" stroke="#5b6a42" /><Corner /></Ico>],
    ["Element type", <Bracket fill="#8ea7c8" mesh><path d="M8 3H15M8 6H15" stroke="#c56a58" strokeWidth="1.400" strokeDasharray="2 1" /></Bracket>],
    ["Verify mesh", <Bracket fill="#8ea7c8" mesh><path d="M8 4L10.500 7L15 1" stroke="#3c6e5c" strokeWidth="1.500" /></Bracket>],
    ["Bottom-up mesh", <Ico><path d="M1 6H11V15H1Z" fill="#7f93b8" stroke="#33456b" /><path d="M1 6L5 1H15L11 6Z" fill="#b6c4d8" stroke="#33456b" /><path d="M11 6L15 1V10L11 15Z" fill="#e0a64a" stroke="#7b5118" /><path d="M1 10H11M5 6V15" stroke="#33456b" /><path d="M5 11H9" stroke="#a8325a" strokeWidth="2" /></Ico>],
  ],
  [
    ["Copy mesh", <Ico><path d="M2 2H8L10 4V11H2Z" fill="#fff" stroke="#777" /><path d="M7 7H14V15H7Z" fill="#9d9d9d" stroke="#555" /><path d="M4 5H7M4 7H7" stroke="#777" /><Corner /></Ico>],
    ["Mesh manager", <TableIco />],
  ],
  [
    ["Adaptivity rule", <Ico><path d="M5 1H10V10H5Z" fill="#e9c25a" stroke="#8e6718" /><path d="M1 10H14V15H1Z" fill="#edd27c" stroke="#8e6718" /><path d="M7.500 1V15" stroke="#a8482a" /><Corner /></Ico>],
    ["Adaptivity move", <Ico><path d="M2 1V10M6 1V10" stroke="#8e6718" /><path d="M1 10H6V14H1ZM10 9H15V14H10Z" fill="#edd27c" stroke="#8e6718" /><path d="M7 6H13M11 4L13 6L11 8" stroke="#a83a3a" /><Corner /></Ico>],
    ["Adaptivity edit", <Ico><path d="M1 10H12V15H1Z" fill="#edd27c" stroke="#8e6718" /><path d="M4 9L12 2L14 4L7 10Z" fill="#aaa" stroke="#444" /><path d="M2 3H7" stroke="#8e6718" strokeWidth="2" /></Ico>],
  ],
  [
    ["Partition edge", <Ico><path d="M1 4H8M11 4H16" stroke="#3d6c9c" strokeWidth="1.500" /><path d="M6 1V7" stroke="#3d6c9c" /><path d="M8 6V13L10 11.500L11.500 15L13 14L12 11H14Z" fill="#fff" stroke="#222" /><Corner /></Ico>],
    ["Partition face", <Ico><path d="M2 2H6V9H14V14H2Z" fill={TAN} stroke="#c28325" /><path d="M6 9L2 14" stroke="#7b5118" /><Corner /></Ico>],
    ["Partition cell", <Ico><path d="M2 2H7V8H13V14H2Z" fill={TAN} stroke="#9b6b22" /><path d="M8 7H14V13H8Z" fill="#c97c5a" stroke="#9b4b32" /><Corner /></Ico>],
    ["Cut geometry", <Ico><path d="M2 1H6V7H11V11H2Z" fill={TAN} stroke="#9b6b22" /><path d="M7 8L14 14M12 8L10 14" stroke="#a05040" strokeWidth="1.300" /><circle cx="10" cy="14" r="1.500" stroke="#a05040" /></Ico>],
  ],
  [
    ["Datum point", <Ico><path d="M3 2C1 3.500 1 6 3 7.500M13 2C15 3.500 15 6 13 7.500M4.500 3L6.500 7M6.500 3L4.500 7M7.200 3L8.300 5L9.300 3M8.300 5V7M10 3H12L10 7H12" stroke="#222" strokeWidth="0.900" /><path d="M8 9.500V14.500M5.500 12H10.500" stroke="#3a7d9c" strokeWidth="1.400" /><Corner /></Ico>],
    ["Datum axis", <Triad />],
    ["Datum plane", <Ico><path d="M9 5L14 2V10L9 13Z" fill="#d8e0b8" stroke="#7a8a55" /><path d="M1 3L5 5L3 8M1 12H8M3 10L1 12L3 14" stroke="#333" strokeWidth="1.200" /><Corner /></Ico>],
    ["Datum system", <Triad red />],
  ],
  [
    ["Virtual topology", <Ico><path d="M1 1H4V6H7V9H1Z" fill={TAN} stroke="#9b6b22" /><path d="M9 8H15V14H9Z" fill={TAN} stroke="#9b6b22" /><path d="M4 9L9 13" stroke="#a83a2a" strokeWidth="1.500" /><Corner /></Ico>],
    ["Combine faces", <Ico><path d="M1 4L4 2L6 4L10 3L15 6V14H1Z" fill="#e59b36" stroke="#8f5a14" /><path d="M4 7C7 9 8 6 15 7" stroke="#8f5a14" /></Ico>],
    ["Ignore entities", <Ico><path d="M4 3H12V13H4Z" stroke="#444" strokeWidth="1.200" /><path d="M4 1V5M12 1V5M4 11V15M12 11V15M1 6H4M12 6H15M1 11H4M12 11H15" stroke="#52658d" strokeWidth="1.400" /></Ico>],
  ],
  [
    ["Mesh edit tools", <Ico><path d="M4 4L13 13M13 3L3 13" stroke="#56665c" strokeWidth="2.500" /><path d="M8 1V4M1 8H4M12 8H15M8 12V15" stroke="#8e9e92" strokeWidth="1.500" /><circle cx="3" cy="3" r="1.500" fill="#6d8074" /><circle cx="13.500" cy="13" r="1.500" fill="#6d8074" /></Ico>],
  ],
];

function Toolbox() {
  return (
    <div className="w-[45px] shrink-0 bg-[#f3f3f3]">
      {toolbox.map((group, i) => (
        <div key={i} className={(i < toolbox.length - 1 ? "border-b border-[#bdbdbd] " : "") + "mr-1 ml-[2px] grid auto-rows-[18px] grid-cols-2 pt-[3px] pb-[2px]"}>
          {group.map(([label, icon]) => (
            <button type="button" key={label} aria-label={label} className="flex items-center justify-center">
              {icon}
            </button>
          ))}
        </div>
      ))}
    </div>
  );
}

/* ---------- viewport ---------- */

type Pt = [number, number];

/* Projective map of the unit square onto a quad: (0,0)->a (1,0)->b (1,1)->c (0,1)->d */
function project([a, b, c, d]: Pt[], u: number, v: number): Pt {
  const dx1 = b[0] - c[0], dx2 = d[0] - c[0], sx = a[0] - b[0] + c[0] - d[0];
  const dy1 = b[1] - c[1], dy2 = d[1] - c[1], sy = a[1] - b[1] + c[1] - d[1];
  const det = dx1 * dy2 - dx2 * dy1;
  const g = (sx * dy2 - dx2 * sy) / det;
  const h = (dx1 * sy - sx * dy1) / det;
  const w = g * u + h * v + 1;
  return [
    ((b[0] - a[0] + g * b[0]) * u + (d[0] - a[0] + h * d[0]) * v + a[0]) / w,
    ((b[1] - a[1] + g * b[1]) * u + (d[1] - a[1] + h * d[1]) * v + a[1]) / w,
  ];
}

function meshPath(q: Pt[], nu: number, nv: number) {
  const seg = (p: Pt, r: Pt) => `M${p[0].toFixed(1)} ${p[1].toFixed(1)}L${r[0].toFixed(1)} ${r[1].toFixed(1)}`;
  let d = "";
  for (let i = 0; i <= nu; i++) d += seg(project(q, i / nu, 0), project(q, i / nu, 1));
  for (let j = 0; j <= nv; j++) d += seg(project(q, 0, j / nv), project(q, 1, j / nv));
  return d;
}

const P = {
  apex: [426, 16] as Pt,
  left: [259, 83.500] as Pt,
  right: [761, 166.500] as Pt,
  front: [594.500, 272.500] as Pt,
  leftLow: [282.500, 264] as Pt,
  rightLow: [735, 358.500] as Pt,
  frontLow: [584.500, 475] as Pt,
};

const faces: { quad: Pt[]; nu: number; nv: number; fill: string }[] = [
  { quad: [P.left, P.front, P.right, P.apex], nu: 10, nv: 5, fill: "#12e7e4" },
  { quad: [P.left, P.front, P.frontLow, P.leftLow], nu: 10, nv: 5, fill: "#0fe0dc" },
  { quad: [P.front, P.right, P.rightLow, P.frontLow], nu: 5, nv: 5, fill: "#0a9690" },
];

function Viewport() {
  return (
    <div className="min-w-0 flex-1 bg-linear-to-b from-[#1b2e43] via-[#2c3d55] via-58% to-[#a0b0c6]">
      <svg viewBox="0 0 1015 483" className="size-full" preserveAspectRatio="xMidYMid meet" role="img" aria-label="Meshed block Part-3">
        {faces.map((f, i) => (
          <g key={i}>
            <polygon points={f.quad.map((p) => p.join(",")).join(" ")} fill={f.fill} />
            <path d={meshPath(f.quad, f.nu, f.nv)} stroke="#075a63" strokeWidth="0.900" fill="none" />
          </g>
        ))}
        <g fontFamily="Liberation Sans, sans-serif" fontWeight="700" fontSize="8" fill="#e8edf2">
          <path d="M81.500 440V422" stroke="#20b52a" strokeWidth="3" />
          <path d="M77 425L81.500 414L86 425Z" fill="#22c52c" />
          <path d="M81.500 440L68 447" stroke="#1212a0" strokeWidth="3" />
          <path d="M61.500 451L66 442L73 449Z" fill="#0b0ba8" />
          <path d="M81.500 440L96 447" stroke="#b01414" strokeWidth="3" />
          <path d="M102 452L91 450L97 442Z" fill="#c31616" />
          <text x="78" y="411">Y</text>
          <text x="52" y="457">Z</text>
          <text x="105" y="457">X</text>
        </g>
        <g stroke="#b9d6ea" strokeWidth="1.200" fill="#10606b">
          <path d="M966 23C958 29 953 37 953 45L966 39Z" />
          <path d="M966 23C974 29 979 37 979 45L966 39Z" />
          <path d="M952.500 50L966 43L979.500 50C982 61 950 61 952.500 50Z" />
          <path d="M966 18V49" />
        </g>
        <circle cx="966" cy="18" r="1.500" fill="#fff" />
        <circle cx="966" cy="50" r="2" fill="#c2202e" />
        <g fontFamily="Liberation Sans, sans-serif" fontSize="6" fill="#b6cf8e">
          <text x="964" y="15">Y</text>
          <text x="948" y="48">Z</text>
          <text x="981" y="48">X</text>
        </g>
      </svg>
    </div>
  );
}

function ContextBar() {
  return (
    <div className="flex h-[22px] items-center bg-linear-to-b from-[#fcfcfc] to-[#f0efee] pl-[6px] text-[9px] leading-3">
      <span className="w-[36px]">Module:</span>
      <Drop label="Module" value="Mesh" w="w-[74px]" spin />
      <span className="ml-[9px] w-[30px]">Model:</span>
      <Drop label="Model" value="Model-1" w="w-[66px]" spin />
      <span className="ml-2 w-[30px]">Object:</span>
      <label className="flex w-[51px] items-center gap-[3px]">
        <input type="radio" name="object" className="size-2 appearance-none rounded-full border border-[#999] bg-[#eee]" />
        Assembly
      </label>
      <label className="flex w-[31px] items-center gap-[3px]">
        <input type="radio" name="object" defaultChecked className="size-2 appearance-none rounded-full border border-[#53728e] bg-white checked:border-2 checked:bg-[#175b94]" />
        Part:
      </label>
      <Drop label="Part" value="Part-3" w="w-[65px]" spin />
    </div>
  );
}

function Brand() {
  return (
    <div className="flex h-[25px] items-center justify-end gap-1 bg-linear-to-b from-[#fafafa] to-[#ededed] text-[#0c8a83]">
      <svg viewBox="0 0 16 16" className="size-4" fill="none" aria-hidden="true">
        <path d="M6 1C9 0 10 2 6 5C9 5 9 10 2 14L5 7M15 5C11 4 10 7 12 8C14 10 12 12 9 11" stroke="#0c8a83" strokeWidth="1.300" />
      </svg>
      <span className="font-['DejaVu_Sans',sans-serif] text-[11px] leading-3 font-bold italic">SIMULIA</span>
    </div>
  );
}

/* ---------- bottom ---------- */

function MessageArea() {
  return (
    <section className="flex h-[94px] border-t border-[#9a9a9a] bg-[#f0f0f0]">
      <div className="flex w-[25px] flex-col items-center gap-[3px] bg-white pt-1">
        <button type="button" aria-label="Message area" className="flex size-[18px] items-center justify-center">
          <Ico className="size-[14px]">
            <path d="M3 1H15V13H3Z" fill="#e4e3c8" stroke="#888" />
            <path d="M1 15L3 11L6 13ZM4 12L8 8" fill="#555" stroke="#555" strokeWidth="1.500" />
          </Ico>
        </button>
        <button type="button" aria-label="Command line" className="flex size-[22px] items-center justify-center border border-[#b5b5b5] bg-[#ddd]">
          <span className="flex size-4 items-center justify-center border border-[#777] bg-[#f0e268]">
            <Ico className="size-3"><path d="M1 4L5 8L1 12M6 4L10 8L6 12M11 4L15 8L11 12" stroke="#222" strokeWidth="1.800" /></Ico>
          </span>
        </button>
      </div>
      <div role="log" className="mb-[3px] min-w-0 flex-1 border-x border-b border-[#a5a5a5] bg-white pt-[2px] pl-[2px] font-['Liberation_Mono',monospace] text-[9px] leading-[9px] text-[#222]">
        <p>A new model database has been created.</p>
        <p>The model "Model-1" has been created.</p>
        <p>Global seeds have been assigned.</p>
        <p>250 elements have been generated on part: Part-3</p>
      </div>
      <div className="w-[11px]" />
    </section>
  );
}

function TaskButton({ label, active, children }: Kids & { label: string; active?: boolean }) {
  return (
    <button
      type="button"
      aria-label={label}
      className={(active ? "from-[#b4b9c8] to-[#747a90] " : "from-[#6d7379] to-[#24292e] ") + "flex h-[26px] w-[38px] items-center justify-center rounded-sm border border-[#7d848a] bg-linear-to-b"}
    >
      {children}
    </button>
  );
}

function Taskbar() {
  return (
    <footer className="flex h-[27px] items-center border-t border-[#5a6470] bg-linear-to-r from-[#04080c] via-[#16203e] to-[#0a101e] text-white">
      <button type="button" aria-label="Start" className="ml-[3px]">
        <svg viewBox="0 0 26 26" className="size-[26px]" aria-hidden="true">
          <circle cx="13" cy="13" r="12" fill="#1f5f92" stroke="#7fb6d8" />
          <ellipse cx="13" cy="7" rx="9" ry="5" fill="#8fbfdd" opacity="0.600" />
          <path d="M6 8C8 6.500 10 6.500 12 8L11.500 12.500C9.500 11.500 8 11.500 5.500 12.500Z" fill="#ee6a35" />
          <path d="M13.500 8.500C16 9.500 18 9 20 8L19.500 12.500C17 13.500 15 13.500 13 12.500Z" fill="#8cc63f" />
          <path d="M5.500 14C8 13 9.500 13 11.500 14L11 18.500C9 17.500 7 17.500 5 18.500Z" fill="#4fa5e0" />
          <path d="M13 14.500C15 15.500 17 15 19 14L18.500 18.500C16.500 19.500 14.500 19.500 12.500 18.500Z" fill="#fbd03b" />
        </svg>
      </button>
      <button type="button" aria-label="Apps" className="ml-[14px]">
        <svg viewBox="0 0 24 24" className="size-[23px]" aria-hidden="true">
          <circle cx="7.500" cy="6" r="5.500" fill="#7cc142" />
          <circle cx="17.500" cy="7.500" r="5.500" fill="#3fa2e8" />
          <circle cx="16.500" cy="17.500" r="5.500" fill="#ef4a3b" />
          <circle cx="6.500" cy="16.500" r="5.500" fill="#f8c62d" />
          <path d="M12 2C10 6 10 10 12 12C15 14 19 14 23 12M12 22C14 18 14 14 12 12C9 10 5 10 1 12" stroke="#060b10" strokeWidth="1.500" fill="none" />
        </svg>
      </button>
      <button type="button" aria-label="Search" className="ml-[17px]">
        <svg viewBox="0 0 20 20" className="size-5" fill="none" aria-hidden="true">
          <circle cx="9" cy="8.500" r="6.500" stroke="#3d8fe8" strokeWidth="2.600" />
          <path d="M13 13L18 18.500" stroke="#3d8fe8" strokeWidth="3" />
        </svg>
      </button>
      <div className="ml-[25px] flex gap-[3px]">
        <TaskButton label="File Explorer">
          <svg viewBox="0 0 22 20" className="h-5 w-[22px]" aria-hidden="true">
            <path d="M1 3H7L8 1H20V17H1Z" fill="#ecd377" />
            <path d="M1 5H21V17H1Z" fill="#f6e7a4" />
            <path d="M3 4H10M12 4H18" stroke="#6a9b56" strokeWidth="1.500" />
            <path d="M5 19V13H17V19H14V16H8V19Z" fill="#7fc3ea" />
          </svg>
        </TaskButton>
        <TaskButton label="PowerPoint">
          <svg viewBox="0 0 20 20" className="size-5" aria-hidden="true">
            <path d="M9 3H19V17H9Z" fill="#fff" stroke="#c9482b" />
            <path d="M12 7H17M12 10H17M12 13H17" stroke="#c9482b" />
            <path d="M1 3L12 1V19L1 17Z" fill="#d24726" />
            <text x="3.500" y="13.500" fontSize="10" fontWeight="700" fill="#fff" fontFamily="Liberation Sans, sans-serif">P</text>
          </svg>
        </TaskButton>
        <TaskButton label="Command Prompt">
          <span className="flex h-4 w-5 items-start border border-[#888] bg-black pl-px font-['Liberation_Mono',monospace] text-[6px] leading-[8px]">C:\_</span>
        </TaskButton>
        <TaskButton label="Abaqus/CAE" active>
          <svg viewBox="0 0 22 22" className="size-[22px]" aria-hidden="true">
            <path d="M8 1H14V6H17L15 10H7L5 6H8ZM7 12H15L17 15L11 22L5 15Z" fill="#6b6aa6" />
            <path d="M1 11H21" stroke="#fff" strokeWidth="2" />
          </svg>
        </TaskButton>
        <TaskButton label="Recorder">
          <svg viewBox="0 0 22 22" className="size-[22px]" aria-hidden="true">
            <circle cx="11" cy="11" r="9" fill="#0a0a0a" stroke="#f2f2f2" strokeWidth="1.800" />
            <circle cx="11" cy="11" r="5.500" fill="#e81d22" />
          </svg>
        </TaskButton>
      </div>
      <div className="ml-auto flex items-center gap-1">
        <Ico className="mr-[6px] size-3"><path d="M1 6H15V13H1Z" fill="#c9cdd2" /><path d="M3 8H13M3 10.500H13" stroke="#555" strokeDasharray="1 1" /><path d="M6 5C7 2 10 5 12 2" stroke="#c9cdd2" /></Ico>
        <Ico className="size-3"><path d="M3 6H7L12 3V13L7 10H3Z" fill="#60707f" /></Ico>
        <Ico className="size-3"><circle cx="8" cy="8" r="7" fill="#111" stroke="#fff" strokeWidth="1.500" /><circle cx="8" cy="8" r="4" fill="#e2272c" /></Ico>
        <Ico className="size-3"><circle cx="8" cy="8" r="7.500" fill="#dcdc27" /><path d="M8 4V12M4 8H12" stroke="#3c6a13" strokeWidth="2.500" /></Ico>
        <Ico className="size-3"><path d="M3 1H8V12H3Z" fill="#b9bfc5" /><circle cx="11" cy="11" r="4.500" fill="#3fae49" /><path d="M9 11L10.500 13L13 9.500" stroke="#fff" strokeWidth="1.500" /></Ico>
        <Ico className="size-3"><path d="M1 5H12V13H1Z" fill="#61a531" /><path d="M14 3V14" stroke="#8d9a80" strokeWidth="1.500" /><circle cx="6" cy="9" r="2.500" stroke="#24420f" /></Ico>
        <Ico className="size-3"><path d="M2 8L10 2V14Z" fill="#d3564b" /><path d="M12 3V13" stroke="#a5b0b8" strokeWidth="1.500" /></Ico>
        <Ico className="size-3"><path d="M2 5.500H5L9 2V14L5 10.500H2Z" fill="#fff" /><path d="M11 5C13 7 13 9 11 11" stroke="#ccc" strokeWidth="1.500" /></Ico>
        <Ico className="size-3"><path d="M1 15V12H3V15ZM4.500 15V10H6.500V15ZM8 15V7H10V15ZM11.500 15V4H14V15Z" fill="#e2e6ea" /></Ico>
      </div>
      <div className="ml-[7px] w-[46px] text-center text-[9px] leading-3 whitespace-nowrap">
        <p>8:34 周日</p>
        <p>2023/1/29</p>
      </div>
      <button type="button" aria-label="Show desktop" className="ml-[28px] h-[26px] w-2 border-l border-[#55606e] bg-linear-to-b from-[#3b4655] to-[#10151d]" />
    </footer>
  );
}

export default function App() {
  return (
    <div className="relative flex min-h-screen flex-col overflow-hidden border-l-2 border-black bg-[#f0f0f0] font-['Lato','Noto_Sans_CJK_SC',sans-serif] text-[#1d1d1d]">
      <header>
        <TitleBar />
        <MenuBar />
        <MainToolbar />
        <ViewToolbar />
      </header>
      <main className="flex flex-1 border-r border-black">
        <ModelPanel />
        <div className="ml-[3px] flex min-w-0 flex-1 flex-col">
          <ContextBar />
          <div className="flex min-h-0 flex-1">
            <Toolbox />
            <Viewport />
          </div>
          <Brand />
        </div>
      </main>
      <MessageArea />
      <Taskbar />

      <RecorderBar />
      <span className="pointer-events-none absolute top-[73px] left-[571px] size-8 rounded-full bg-[#dede1e]/40" />
      <svg viewBox="0 0 14 20" className="pointer-events-none absolute top-[87px] left-[587px] h-5 w-[14px]" aria-hidden="true">
        <path d="M1 1V16L4.500 13L7 19L10 18L7.500 12H12Z" fill="#fff" stroke="#222" strokeWidth="0.800" />
      </svg>
      <span className="absolute top-[409px] right-px h-[42px] w-[6px] rounded-sm border border-[#98a5b0] bg-linear-to-b from-[#1b2836] from-70% to-[#2fd04c] to-80%" />
      <p className="pointer-events-none absolute top-[591px] left-[524px] font-['Inter',sans-serif] text-[52px] leading-[64px] font-semibold whitespace-nowrap text-[#f5ea2a] tabular-nums [text-shadow:4px_0_#000,4px_1px_#000,4px_2px_#000,3px_3px_#000,2px_4px_#000,1px_4px_#000,0_4px_#000,-1px_4px_#000,-2px_4px_#000,-3px_3px_#000,-4px_2px_#000,-4px_1px_#000,-4px_0_#000,-4px_-1px_#000,-4px_-2px_#000,-3px_-3px_#000,-2px_-4px_#000,-1px_-4px_#000,0_-4px_#000,1px_-4px_#000,2px_-4px_#000,3px_-3px_#000,4px_-2px_#000,4px_-1px_#000]">1 2 3 OK</p>
      <div role="tooltip" className="absolute right-[48px] bottom-[27px] w-[56px] rounded-t-sm border border-[#777] bg-[#f7f7f9] pl-[3px] text-[9px] leading-3 whitespace-nowrap text-[#555] shadow-sm">
        <p>CMCC-2urb</p>
        <p className="italic">Internet 访问</p>
      </div>
    </div>
  );
}
